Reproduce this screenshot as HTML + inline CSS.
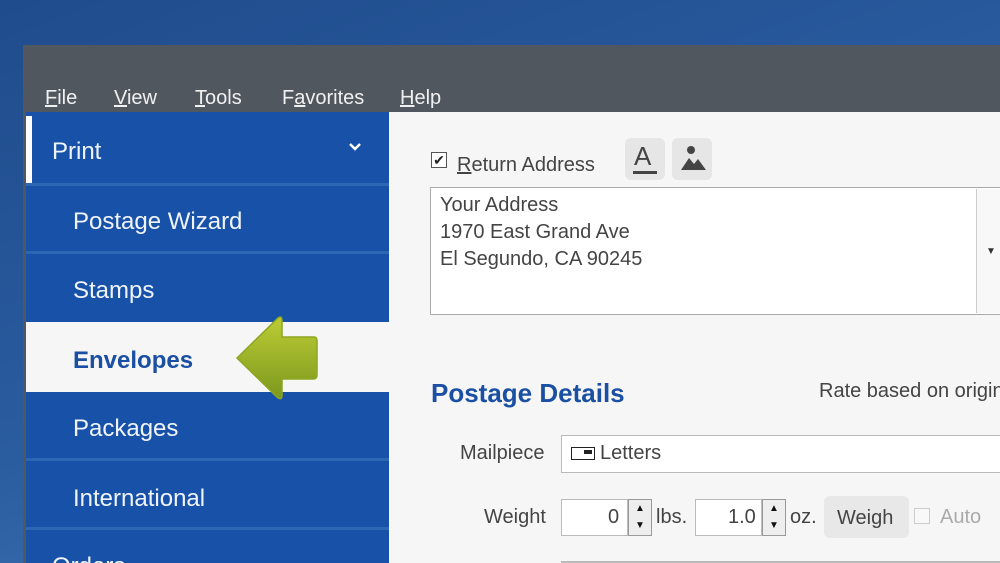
<!DOCTYPE html>
<html><head><style>
*{margin:0;padding:0;box-sizing:border-box}
html,body{width:1000px;height:563px;overflow:hidden}
body{position:relative;font-family:"Liberation Sans",sans-serif;background:linear-gradient(160deg,#1f4c8c 0%,#2a5ca0 50%,#4d84c4 100%)}
.abs{position:absolute}
.win{left:23px;top:45px;width:977px;height:518px;background:#51575e}
.menu{top:87px;font-size:20px;color:#f0f0f0}
.side{left:26px;top:112px;width:363px;height:451px;background:#1752a8;overflow:hidden}
.row{position:absolute;left:0;color:#f0f4fa;font-size:24px;white-space:nowrap}
.sep{position:absolute;left:0;width:363px;height:3px;background:#2e66b6}
.content{left:389px;top:112px;width:611px;height:451px;background:#f6f6f6}
.t{color:#444;font-size:20px;white-space:nowrap}
</style></head><body>
<div class="abs win"></div>
<div class="abs menu" style="left:45px"><u>F</u>ile</div>
<div class="abs menu" style="left:114px"><u>V</u>iew</div>
<div class="abs menu" style="left:195px"><u>T</u>ools</div>
<div class="abs menu" style="left:282px">F<u>a</u>vorites</div>
<div class="abs menu" style="left:400px"><u>H</u>elp</div>
<div class="abs side">
 <div class="abs" style="left:0;top:4px;width:6px;height:68px;background:#fff"></div>
 <div class="row" style="top:26px;left:26px">Print</div>
 <svg class="abs" style="left:322px;top:30px" width="14" height="10"><path d="M2 2 L7 7 L12 2" stroke="#fff" stroke-width="2.5" fill="none"/></svg>
 <div class="sep" style="top:71px"></div>
 <div class="row" style="top:96px;left:47px">Postage Wizard</div>
 <div class="sep" style="top:139px"></div>
 <div class="row" style="top:165px;left:47px">Stamps</div>
 <div class="abs" style="left:0;top:210px;width:363px;height:70px;background:#f6f6f6"></div>
 <div class="row" style="top:235px;left:47px;color:#1a4fa3;font-weight:bold">Envelopes</div>
 <div class="row" style="top:303px;left:47px">Packages</div>
 <div class="sep" style="top:346px"></div>
 <div class="row" style="top:373px;left:47px">International</div>
 <div class="sep" style="top:415px"></div>
 <div class="row" style="top:441px;left:26px">Orders</div>
</div>
<svg class="abs" style="left:234px;top:315px" width="86" height="88"><defs><linearGradient id="g" x1="0" y1="0" x2="0" y2="1"><stop offset="0" stop-color="#bccd35"/><stop offset="1" stop-color="#7c971d"/></linearGradient></defs><path d="M3 43 L44 3 Q48 0 48 6 L48 22 L80 22 Q83 22 83 26 L83 60 Q83 64 79 64 L48 64 L48 80 Q48 86 43 82 Z" fill="url(#g)" stroke="#8ea521" stroke-width="1.5"/></svg>
<div class="abs content"></div>
<div class="abs" style="left:431px;top:152px;width:16px;height:16px;border:1px solid #555;background:#fff;font-size:14px;line-height:14px;text-align:center;color:#222">✔</div>
<div class="abs t" style="left:457px;top:154px"><u>R</u>eturn Address</div>
<div class="abs" style="left:625px;top:138px;width:40px;height:42px;background:#e6e6e6;border-radius:6px"></div>
<div class="abs" style="left:634px;top:141px;font-size:26px;color:#444">A</div>
<div class="abs" style="left:633px;top:171px;width:24px;height:3px;background:#444"></div>
<div class="abs" style="left:672px;top:138px;width:40px;height:42px;background:#e6e6e6;border-radius:6px"></div>
<svg class="abs" style="left:678px;top:145px" width="30" height="28"><circle cx="13" cy="5" r="4" fill="#444"/><path d="M3 25 L11 13 L16 19 L20 14 L28 25 Z" fill="#444"/></svg>
<div class="abs" style="left:430px;top:187px;width:580px;height:128px;border:1px solid #aaa;background:#fff"></div>
<div class="abs" style="left:976px;top:189px;width:24px;height:124px;border-left:1px solid #ccc;background:#f8f8f8"></div>
<div class="abs" style="left:986px;top:246px;font-size:10px;color:#333">▼</div>
<div class="abs t" style="left:440px;top:192px;line-height:27px">Your Address<br>1970 East Grand Ave<br>El Segundo, CA 90245</div>
<div class="abs" style="left:431px;top:378px;font-size:26px;font-weight:bold;color:#1a4fa3">Postage Details</div>
<div class="abs t" style="left:819px;top:380px">Rate based on origin</div>
<div class="abs t" style="left:460px;top:442px">Mailpiece</div>
<div class="abs" style="left:561px;top:435px;width:450px;height:38px;border:1px solid #bbb;background:#fff"></div>
<div class="abs" style="left:571px;top:447px;width:24px;height:13px;border:1.5px solid #222"></div>
<div class="abs" style="left:584px;top:450px;width:8px;height:4px;background:#222"></div>
<div class="abs t" style="left:600px;top:442px">Letters</div>
<div class="abs t" style="left:484px;top:506px">Weight</div>
<div class="abs" style="left:561px;top:499px;width:67px;height:37px;border:1px solid #bbb;background:#fff"></div>
<div class="abs t" style="left:608px;top:506px">0</div>
<div class="abs" style="left:628px;top:499px;width:24px;height:37px;border:1px solid #999;background:#eee;font-size:10px;text-align:center;line-height:17px;color:#111">▲<br>▼</div>
<div class="abs t" style="left:656px;top:506px">lbs.</div>
<div class="abs" style="left:695px;top:499px;width:67px;height:37px;border:1px solid #bbb;background:#fff"></div>
<div class="abs t" style="left:728px;top:506px">1.0</div>
<div class="abs" style="left:762px;top:499px;width:24px;height:37px;border:1px solid #999;background:#eee;font-size:10px;text-align:center;line-height:17px;color:#111">▲<br>▼</div>
<div class="abs t" style="left:790px;top:506px">oz.</div>
<div class="abs" style="left:824px;top:496px;width:85px;height:42px;background:#e8e8e8;border-radius:6px"></div>
<div class="abs t" style="left:837px;top:507px">Weigh</div>
<div class="abs" style="left:914px;top:508px;width:16px;height:16px;border:1px solid #ccc;background:#f8f8f8"></div>
<div class="abs" style="left:940px;top:506px;font-size:20px;color:#aaa">Auto</div>
<div class="abs" style="left:561px;top:561px;width:440px;height:2px;background:#bbb"></div>
</body></html>
